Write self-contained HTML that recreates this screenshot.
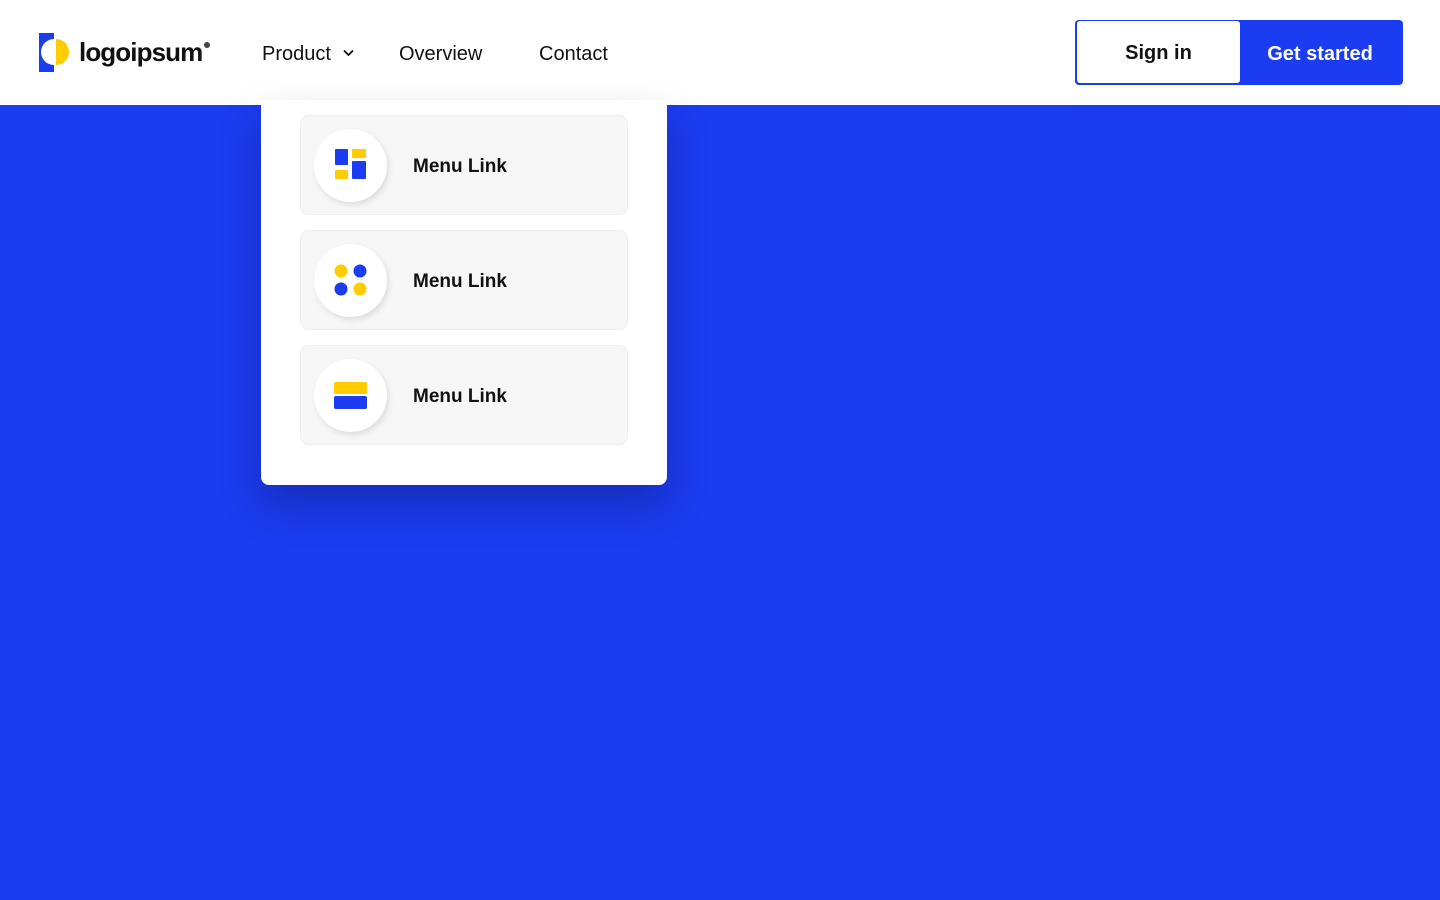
<!DOCTYPE html>
<html><head><style>
*{margin:0;padding:0;box-sizing:border-box}
body{width:1440px;height:900px;background:#1b3cf0;font-family:"Liberation Sans",sans-serif;position:relative;overflow:hidden}
.hdr{position:absolute;left:0;top:0;width:1440px;height:105px;background:#fff}
.nav{position:absolute;top:43px;font-size:20px;color:#111}
.dd{position:absolute;left:261px;top:100px;width:406px;height:385px;background:#fff;border-radius:0 0 8px 8px;box-shadow:0 20px 40px rgba(0,0,30,.25)}
.item{position:absolute;left:39px;width:328px;height:100px;background:#f6f6f6;border:1px solid #efefef;border-radius:8px}
.circ{position:absolute;left:13px;top:13px;width:73px;height:73px;border-radius:50%;background:#fff;box-shadow:2px 3px 6px rgba(0,0,0,.1)}
.lbl{position:absolute;left:112px;top:40px;font-size:19px;font-weight:bold;color:#111}
</style></head><body>
<div class="hdr">
<svg style="position:absolute;left:38px;top:32px" width="34" height="41" viewBox="0 0 34 41">
<rect x="1" y="1" width="15" height="39" fill="#1b3cf0"/>
<path d="M18 7a13 13 0 0 1 0 26z" fill="#ffcc00"/>
<path d="M16 7a13 13 0 0 0 0 26z" fill="#fff"/>
</svg>
<div style="position:absolute;left:79px;top:37px;font-size:26px;font-weight:bold;color:#111;letter-spacing:-0.9px">logoipsum</div>
<div style="position:absolute;left:204px;top:42px;width:6px;height:6px;border-radius:50%;background:#444"></div>
<div class="nav" style="left:262px">Product</div>
<svg style="position:absolute;left:343px;top:49px" width="11" height="8"><path d="M1 1.5l4.5 4.5 4.5-4.5" stroke="#111" stroke-width="1.8" fill="none"/></svg>
<div class="nav" style="left:399px">Overview</div>
<div class="nav" style="left:539px">Contact</div>
<div style="position:absolute;left:1075px;top:20px;width:328px;height:65px;background:#1b3cf0;border-radius:4px"></div>
<div style="position:absolute;left:1077px;top:21px;width:163px;height:62px;background:#fff;border-radius:3px;text-align:center;line-height:64px;font-size:20px;font-weight:bold;color:#111">Sign in</div>
<div style="position:absolute;left:1240px;top:21px;width:160px;height:62px;text-align:center;line-height:66px;font-size:20px;font-weight:bold;color:#fff">Get started</div>
</div>
<div class="dd">
<div class="item" style="top:15px"><div class="circ"><svg width="73" height="73"><rect x="21" y="20" width="13" height="16" rx="1" fill="#1b3cf0"/><rect x="38" y="20" width="14" height="9" rx="1" fill="#ffcc00"/><rect x="21" y="41" width="13" height="9" rx="1" fill="#ffcc00"/><rect x="38" y="32" width="14" height="18" rx="1" fill="#1b3cf0"/></svg></div><div class="lbl">Menu Link</div></div>
<div class="item" style="top:130px"><div class="circ"><svg width="73" height="73"><circle cx="27" cy="27" r="6.5" fill="#ffcc00"/><circle cx="46" cy="27" r="6.5" fill="#1b3cf0"/><circle cx="27" cy="45" r="6.5" fill="#1b3cf0"/><circle cx="46" cy="45" r="6.5" fill="#ffcc00"/></svg></div><div class="lbl">Menu Link</div></div>
<div class="item" style="top:245px"><div class="circ"><svg width="73" height="73"><rect x="20" y="23" width="33" height="12" rx="2" fill="#ffcc00"/><rect x="20" y="37" width="33" height="13" rx="2" fill="#1b3cf0"/></svg></div><div class="lbl">Menu Link</div></div>
</div>
</body></html>
